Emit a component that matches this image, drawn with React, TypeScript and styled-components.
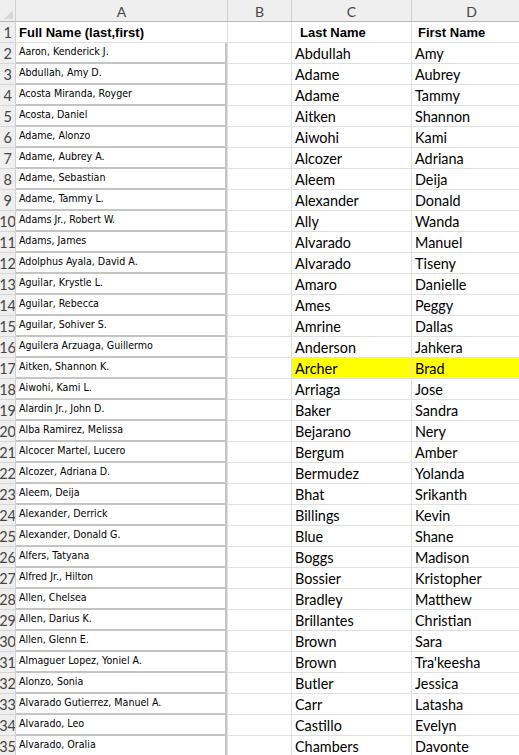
import React from "react";
import styled, { createGlobalStyle } from "styled-components";

const Global = createGlobalStyle`
  html, body { margin: 0; padding: 0; background: #ffffff; overflow: hidden; }
  * { box-sizing: border-box; }
`;

const Sheet = styled.div`
  display: grid;
  grid-template-columns: 16px 212px 64px 120px 120px;
  grid-template-rows: 22px;
  grid-auto-rows: 21px;
  width: 532px;
`;

const Corner = styled.div`
  position: relative;
  background: #efefef;
  border-right: 1px solid #d0d0d0;
  border-bottom: 1px solid #b8b8b8;
  &::after {
    content: "";
    position: absolute;
    right: 2px;
    bottom: 2px;
    border-style: solid;
    border-width: 0 0 9px 9px;
    border-color: transparent transparent #d6d6d6 transparent;
  }
`;

const ColHead = styled.div`
  background: #efefef;
  border-right: 1px solid #d0d0d0;
  border-bottom: 1px solid #b8b8b8;
  font-family: "Lato", "Open Sans", sans-serif;
  font-size: 14px;
  color: #444;
  display: flex;
  align-items: center;
  justify-content: center;
  padding-top: 1px;
`;

const RowHead = styled.div`
  background: #efefef;
  border-right: 1px solid #d0d0d0;
  border-bottom: 1px solid #d6d6d6;
  font-family: "Lato", "Open Sans", sans-serif;
  font-size: 14.5px;
  color: #444;
  display: flex;
  align-items: flex-end;
  justify-content: center;
  padding-bottom: 1px;
  overflow: hidden;
  white-space: nowrap;
  letter-spacing: -0.2px;
`;

const Cell = styled.div<{ $hl?: boolean; $pad?: number }>`
  background: ${(p) => (p.$hl ? "#ffff00" : "#ffffff")};
  border-right: 1px solid #e0e0e0;
  border-bottom: 1px solid #e0e0e0;
  font-family: "Lato", "Carlito", sans-serif;
  font-size: 14.4px;
  color: #000;
  display: flex;
  align-items: flex-end;
  padding-left: ${(p) => p.$pad ?? 3}px;
  padding-bottom: 1px;
  white-space: nowrap;
  overflow: hidden;
`;

const HeadCell = styled(Cell)`
  font-family: "Liberation Sans", Arial, sans-serif;
  font-weight: bold;
  font-size: 13px;
  align-items: center;
  padding-top: 1px;
  padding-bottom: 0;
`;

const NameBox = styled.div`
  background: #ffffff;
  border-right: 2px solid #c4c4c4;
  border-bottom: 2px solid #c4c4c4;
  box-shadow: 1px 0 0 #e0e0e0;
  margin-right: 1px;
  font-family: "DejaVu Sans Condensed", "DejaVu Sans", Tahoma, sans-serif;
  font-size: 10.6px;
  color: #000;
  padding: 2px 0 0 3px;
  white-space: nowrap;
  overflow: hidden;
`;

const fullNames = [
  "Aaron, Kenderick J.",
  "Abdullah, Amy D.",
  "Acosta Miranda, Royger",
  "Acosta, Daniel",
  "Adame, Alonzo",
  "Adame, Aubrey A.",
  "Adame, Sebastian",
  "Adame, Tammy L.",
  "Adams Jr., Robert W.",
  "Adams, James",
  "Adolphus Ayala, David A.",
  "Aguilar, Krystle L.",
  "Aguilar, Rebecca",
  "Aguilar, Sohiver S.",
  "Aguilera Arzuaga, Guillermo",
  "Aitken, Shannon K.",
  "Aiwohi, Kami L.",
  "Alardin Jr., John D.",
  "Alba Ramirez, Melissa",
  "Alcocer Martel, Lucero",
  "Alcozer, Adriana D.",
  "Aleem, Deija",
  "Alexander, Derrick",
  "Alexander, Donald G.",
  "Alfers, Tatyana",
  "Alfred Jr., Hilton",
  "Allen, Chelsea",
  "Allen, Darius K.",
  "Allen, Glenn E.",
  "Almaguer Lopez, Yoniel A.",
  "Alonzo, Sonia",
  "Alvarado Gutierrez, Manuel A.",
  "Alvarado, Leo",
  "Alvarado, Oralia",
];

const pairs: [string, string][] = [
  ["Abdullah", "Amy"],
  ["Adame", "Aubrey"],
  ["Adame", "Tammy"],
  ["Aitken", "Shannon"],
  ["Aiwohi", "Kami"],
  ["Alcozer", "Adriana"],
  ["Aleem", "Deija"],
  ["Alexander", "Donald"],
  ["Ally", "Wanda"],
  ["Alvarado", "Manuel"],
  ["Alvarado", "Tiseny"],
  ["Amaro", "Danielle"],
  ["Ames", "Peggy"],
  ["Amrine", "Dallas"],
  ["Anderson", "Jahkera"],
  ["Archer", "Brad"],
  ["Arriaga", "Jose"],
  ["Baker", "Sandra"],
  ["Bejarano", "Nery"],
  ["Bergum", "Amber"],
  ["Bermudez", "Yolanda"],
  ["Bhat", "Srikanth"],
  ["Billings", "Kevin"],
  ["Blue", "Shane"],
  ["Boggs", "Madison"],
  ["Bossier", "Kristopher"],
  ["Bradley", "Matthew"],
  ["Brillantes", "Christian"],
  ["Brown", "Sara"],
  ["Brown", "Tra'keesha"],
  ["Butler", "Jessica"],
  ["Carr", "Latasha"],
  ["Castillo", "Evelyn"],
  ["Chambers", "Davonte"],
];

export default function App() {
  return (
    <>
      <Global />
      <Sheet>
        <Corner />
        <ColHead>A</ColHead>
        <ColHead>B</ColHead>
        <ColHead>C</ColHead>
        <ColHead>D</ColHead>

        <RowHead>1</RowHead>
        <HeadCell>Full Name (last,first)</HeadCell>
        <Cell />
        <HeadCell $pad={8}>Last Name</HeadCell>
        <HeadCell $pad={6}>First Name</HeadCell>

        {fullNames.map((name, i) => {
          const [last, first] = pairs[i];
          const hl = last === "Archer";
          return (
            <React.Fragment key={i}>
              <RowHead>{i + 2}</RowHead>
              <NameBox>{name}</NameBox>
              <Cell />
              <Cell $hl={hl}>{last}</Cell>
              <Cell $hl={hl}>{first}</Cell>
            </React.Fragment>
          );
        })}
      </Sheet>
    </>
  );
}
